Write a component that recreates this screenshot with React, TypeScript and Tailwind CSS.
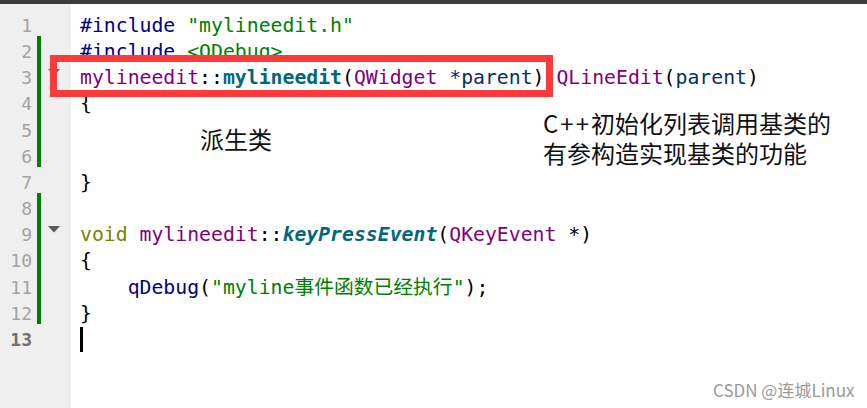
import React from "react";

type Tok = { t: string; c?: string; b?: boolean; i?: boolean };

const kw = "text-[#808000]";
const type = "text-[#800080]";
const fn = "text-[#00677c]";
const pre = "text-[#000080]";
const str = "text-[#008000]";
const par = "text-[#092e64]";

const lines: { toks: Tok[]; bar?: boolean; fold?: boolean }[] = [
    { toks: [{ t: "#include ", c: pre }, { t: '"mylineedit.h"', c: str }] },
    { bar: true, toks: [{ t: "#include ", c: pre }, { t: "<QDebug>", c: str }] },
    {
        bar: true,
        fold: true,
        toks: [
            { t: "mylineedit", c: type },
            { t: "::" },
            { t: "mylineedit", c: fn, b: true },
            { t: "(" },
            { t: "QWidget", c: type },
            { t: " *parent", c: par },
            { t: "):" },
            { t: "QLineEdit", c: type },
            { t: "(" },
            { t: "parent", c: par },
            { t: ")" },
        ],
    },
    { bar: true, toks: [{ t: "{" }] },
    { bar: true, toks: [] },
    { bar: true, toks: [] },
    { toks: [{ t: "}" }] },
    { bar: true, toks: [] },
    {
        bar: true,
        fold: true,
        toks: [
            { t: "void", c: kw },
            { t: " " },
            { t: "mylineedit", c: type },
            { t: "::" },
            { t: "keyPressEvent", c: fn, b: true, i: true },
            { t: "(" },
            { t: "QKeyEvent", c: type },
            { t: " *)" },
        ],
    },
    { bar: true, toks: [{ t: "{" }] },
    {
        bar: true,
        toks: [
            { t: "    " },
            { t: "qDebug", c: pre },
            { t: "(" },
            { t: '"myline事件函数已经执行"', c: str },
            { t: ");" },
        ],
    },
    { bar: true, toks: [{ t: "}" }] },
    { toks: [] },
];

const mono = "font-['DejaVu_Sans_Mono','Noto_Sans_CJK_SC',monospace]";
const cjk = "font-['Noto_Sans_CJK_SC','Noto_Sans',sans-serif]";

function FoldArrow() {
    return (
        <svg width="12" height="7" viewBox="0 0 12 7" className="-mt-[5px]">
            <path d="M0 0 H12 L6 6.5 Z" fill="#5a5a5a" />
        </svg>
    );
}

export default function App() {
    return (
        <div className="relative h-[408px] w-[867px] overflow-hidden bg-white">
            <div className="h-[4px] bg-[#3c3c3c]" />
            <div className="flex h-[404px]">
                <div className="w-[71px] bg-[#efefef] pt-[6px]">
                    {lines.map((l, n) => (
                        <div key={n} className="flex h-[26.17px]">
                            <span
                                className={
                                    "w-[32px] pt-[7px] text-right text-[18px] leading-none " +
                                    mono +
                                    (n === 12
                                        ? " font-bold text-[#707070]"
                                        : " text-[#a3a3a3]")
                                }
                            >
                                {n + 1}
                            </span>
                            <span
                                className={
                                    "ml-[5px] w-[4px] " +
                                    (l.bar ? "bg-[#008000]" : "")
                                }
                            />
                            <span className="ml-[7px] flex w-[12px] items-center">
                                {l.fold && <FoldArrow />}
                            </span>
                        </div>
                    ))}
                </div>
                <div className="flex-1 pl-[9px] pt-[9px]">
                    {lines.map((l, n) => (
                        <div
                            key={n}
                            className={
                                "h-[26.17px] whitespace-pre text-[19.8px] leading-[26.17px] text-black " +
                                mono
                            }
                        >
                            {l.toks.map((k, j) => (
                                <span
                                    key={j}
                                    className={
                                        (k.c ?? "") +
                                        (k.b ? " font-bold" : "") +
                                        (k.i ? " italic" : "")
                                    }
                                >
                                    {k.t}
                                </span>
                            ))}
                            {n === 12 && (
                                <span className="inline-block h-[25px] w-[3px] bg-black align-top" />
                            )}
                        </div>
                    ))}
                </div>
            </div>

            {/* annotations */}
            <div className="absolute left-[50px] top-[55px] h-[42px] w-[503px] border-[7px] border-[#fd3a3a]" />
            <div
                className={
                    "absolute left-[200px] top-[124px] text-[24px] leading-[30px] text-[#111] " +
                    cjk
                }
            >
                派生类
            </div>
            <div
                className={
                    "absolute left-[543px] top-[108px] flex flex-col text-[24px] leading-[30px] text-[#111] " +
                    cjk
                }
            >
                <span>
                    <span className="tracking-[2px]">C++</span>初始化列表调用基类的
                </span>
                <span>有参构造实现基类的功能</span>
            </div>
            <div
                className={
                    "absolute left-[713px] top-[379px] text-[17px] leading-[22px] text-[#9a9a9a] " +
                    cjk
                }
            >
                CSDN @连城Linux
            </div>
        </div>
    );
}
